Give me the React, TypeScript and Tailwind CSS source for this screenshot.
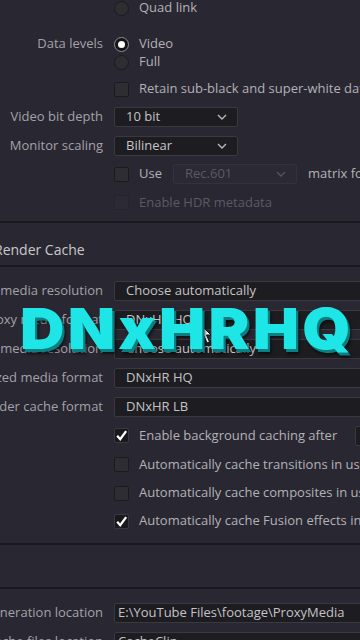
import React from 'react';

const font = { fontFamily: '"Open Sans", "Noto Sans", sans-serif' };

const Chevron = ({ dim }: { dim?: boolean }) => (
  <svg width="10" height="6" viewBox="0 0 10 6" className="shrink-0">
    <path d="M1 1 L5 5 L9 1" fill="none" stroke={dim ? '#55545c' : '#b9b8bd'} strokeWidth="1.4" />
  </svg>
);

const Radio = ({ on }: { on?: boolean }) => (
  <span
    className={`w-[15px] h-[15px] rounded-full shrink-0 flex items-center justify-center border ${
      on ? 'bg-[#141317] border-[#8f8e94]' : 'bg-[#2e2d32] border-[#1b1a1f]'
    }`}
  >
    {on && <span className="w-[7px] h-[7px] rounded-full bg-white" />}
  </span>
);

const Check = ({ on, dim }: { on?: boolean; dim?: boolean }) => (
  <span
    className={`w-[15px] h-[15px] rounded-[2px] shrink-0 flex items-center justify-center border ${
      dim ? 'bg-[#2c2a33] border-[#25232b]' : on ? 'bg-[#19181c] border-[#3a3941]' : 'bg-[#2e2d32] border-[#1b1a1f]'
    }`}
  >
    {on && (
      <svg width="13" height="13" viewBox="0 0 12 12">
        <path d="M2 6.3 L4.8 9.4 L10.3 2" fill="none" stroke="#ffffff" strokeWidth="2.1" />
      </svg>
    )}
  </span>
);

const Select = ({ value, w, dim }: { value: string; w: string; dim?: boolean }) => (
  <div
    className={`${w} h-[20px] shrink-0 rounded-[2px] border flex items-center justify-between pl-[11px] pr-[10px] ${
      dim ? 'bg-[#2b2933] border-[#34323c] text-[#5b5a63]' : 'bg-[#1d1c20] border-[#3a3940] text-[#c4c3c7]'
    }`}
  >
    <span>{value}</span>
    <Chevron dim={dim} />
  </div>
);

const Field = ({ value, pl = 'pl-[11px]' }: { value: string; pl?: string }) => (
  <div className={`w-[260px] h-[20px] shrink-0 rounded-[2px] border bg-[#1d1c20] border-[#3a3940] text-[#c4c3c7] flex items-center ${pl}`}>
    <span className="whitespace-nowrap">{value}</span>
  </div>
);

const Row = ({ label, h = 'h-[29px]', children }: { label?: string; h?: string; children?: React.ReactNode }) => (
  <div className={`flex items-center ${h}`}>
    <div className="w-[103px] shrink-0 flex justify-end">
      <span className="whitespace-nowrap text-[#a3a2a8]">{label}</span>
    </div>
    <div className="ml-[11px] flex items-center whitespace-nowrap">{children}</div>
  </div>
);

const Opt = ({ children, dim }: { children: React.ReactNode; dim?: boolean }) => (
  <span className={`ml-[10px] whitespace-nowrap ${dim ? 'text-[#5b5a63]' : 'text-[#b3b2b7]'}`}>{children}</span>
);

const Band = ({ title }: { title?: string }) => (
  <div className="border-t-2 border-b-2 border-[#19181d] h-[46px] flex items-end pb-[5px]">
    <span className="ml-[-6px] text-[14px] text-[#c9c8cc] whitespace-nowrap">{title}</span>
  </div>
);

export default function App() {
  return (
    <div className="relative w-[360px] h-[640px] overflow-hidden bg-[#292731] text-[13px]" style={font}>
      <div className="flex flex-col">
        <Row h="h-[16px]">
          <Radio />
          <Opt>Quad link</Opt>
        </Row>
        <div className="h-[19px]" />
        <Row label="Data levels" h="h-[18px]">
          <Radio on />
          <Opt>Video</Opt>
        </Row>
        <Row h="h-[18px]">
          <Radio />
          <Opt>Full</Opt>
        </Row>
        <div className="h-[5px]" />
        <Row h="h-[26px]">
          <Check />
          <Opt>Retain sub-black and super-white data</Opt>
        </Row>
        <Row label="Video bit depth">
          <Select value="10 bit" w="w-[124px]" />
        </Row>
        <Row label="Monitor scaling">
          <Select value="Bilinear" w="w-[124px]" />
        </Row>
        <Row h="h-[28px]">
          <Check />
          <Opt>Use</Opt>
          <div className="ml-[11px]">
            <Select value="Rec.601" w="w-[124px]" dim />
          </div>
          <span className="ml-[11px] text-[#b3b2b7]">matrix for 4:2:2 SDI output</span>
        </Row>
        <Row h="h-[29px]">
          <Check dim />
          <Opt dim>Enable HDR metadata</Opt>
        </Row>
        <div className="h-[4px]" />
        <Band title="Render Cache" />
        <div className="h-[9px]" />
        <Row label="Proxy media resolution">
          <Field value="Choose automatically" />
        </Row>
        <Row label="Proxy media format">
          <Field value="DNxHR HQ" />
        </Row>
        <Row label="Optimized media resolution">
          <Field value="Choose automatically" />
        </Row>
        <Row label="Optimized media format">
          <Field value="DNxHR HQ" />
        </Row>
        <Row label="Render cache format">
          <Field value="DNxHR LB" />
        </Row>
        <Row>
          <Check on />
          <Opt>Enable background caching after</Opt>
          <div className="ml-[18px] w-[40px] h-[20px] rounded-[2px] border bg-[#1d1c20] border-[#3a3940]" />
        </Row>
        <Row>
          <Check />
          <Opt>Automatically cache transitions in user mode</Opt>
        </Row>
        <Row h="h-[28px]">
          <Check />
          <Opt>Automatically cache composites in user mode</Opt>
        </Row>
        <Row h="h-[28px]">
          <Check on />
          <Opt>Automatically cache Fusion effects in user mode</Opt>
        </Row>
        <div className="h-[8px]" />
        <Band />
        <div className="h-[9px]" />
        <Row label="Proxy generation location">
          <Field value="E:\YouTube Files\footage\ProxyMedia" pl="pl-[3px]" />
        </Row>
        <Row label="Cache files location">
          <Field value="CacheClip" pl="pl-[3px]" />
        </Row>
      </div>

      <svg className="absolute left-[199px] top-[323px]" width="13" height="21" viewBox="0 0 13 21">
        <path d="M1 1 L1 17 L5 13 L8 20 L10.5 19 L7.5 12 L12 12 Z" fill="#ffffff" stroke="#111" strokeWidth="1" />
      </svg>

      <div
        className="absolute left-[20px] top-[300px] origin-left scale-x-[1.08] text-[57px] leading-none font-black tracking-[3px] text-[#1fe6e6] whitespace-nowrap"
        style={{ fontFamily: 'Inter, "Noto Sans", sans-serif', textShadow: '2px 3px 0 #0a7e80, 3px 5px 3px rgba(0,0,0,0.6)' }}
      >
        DNxHRHQ
      </div>
    </div>
  );
}
